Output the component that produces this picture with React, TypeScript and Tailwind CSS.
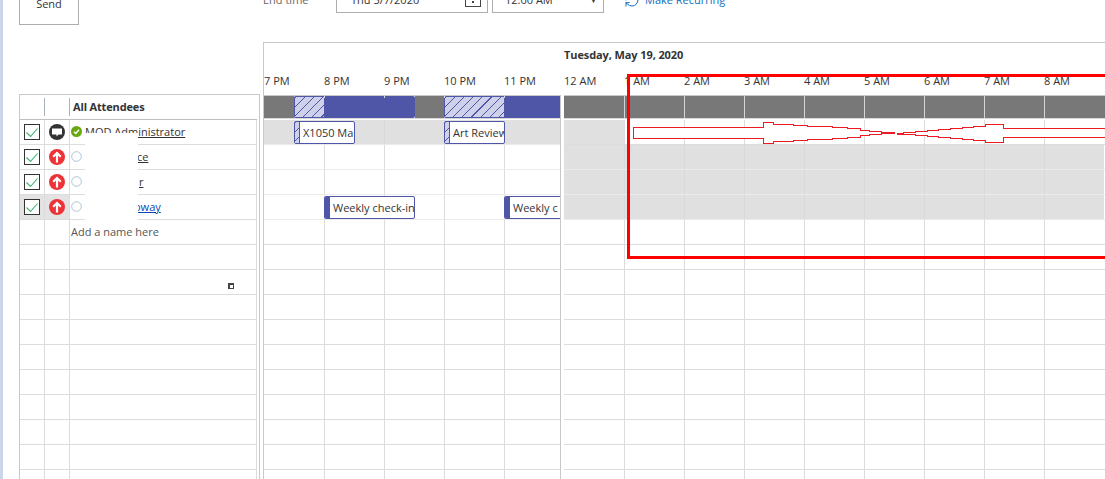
import React from 'react';
import { RefreshCw } from 'lucide-react';

const ROWS = Array.from({ length: 15 }, (_, i) => i);
const HATCH = 'bg-[repeating-linear-gradient(135deg,#4f56a8_0,#4f56a8_0.8px,#cfd1ea_0.8px,#cfd1ea_6.5px)]';

const attendees = [
  { name: 'MOD Administrator', pad: 'pl-[3px]', color: 'text-[#333]', kind: 'organizer' },
  { name: 'ce', pad: 'pl-[55px]', color: 'text-[#333]', kind: 'required' },
  { name: 'r', pad: 'pl-[57px]', color: 'text-[#333]', kind: 'required' },
  { name: 'oway', pad: 'pl-[52px]', color: 'text-[#0b45b5]', kind: 'required' },
];

const Check = () => (
  <svg width="16" height="16" viewBox="0 0 14 14" className="border border-[#333] bg-white">
    <path d="M1.5 7.5 L5.5 11.5 L12.5 3.5" fill="none" stroke="#3eb370" strokeWidth="1.1" />
  </svg>
);

const Bubble = () => (
  <svg width="16" height="16" viewBox="0 0 16 16">
    <circle cx="8" cy="8" r="8" fill="#333" />
    <path d="M3 4.5 H13 V10.5 H9.5 L7.5 12.5 V10.5 H3 Z" fill="#fff" />
  </svg>
);

const UpArrow = () => (
  <svg width="16" height="16" viewBox="0 0 16 16">
    <circle cx="8" cy="8" r="8" fill="#ee3338" />
    <path d="M8 13.5 V4 M4.2 7.8 L8 4 L11.8 7.8" fill="none" stroke="#fff" strokeWidth="2.2" />
  </svg>
);

const Presence = ({ on }: { on: boolean }) => (
  <svg width="11" height="11" viewBox="0 0 11 11" className="shrink-0 -mt-px">
    {on ? (
      <>
        <circle cx="5.5" cy="5.5" r="5.5" fill="#6ba80f" />
        <path d="M3 5.7 L4.8 7.4 L8 3.8" fill="none" stroke="#fff" strokeWidth="1.4" />
      </>
    ) : (
      <circle cx="5.5" cy="5.5" r="4.8" fill="#fff" stroke="#aac4d4" />
    )}
  </svg>
);

const AttendeeTable = () => (
  <div className="relative w-[241px] h-[385px] border-l border-t border-r border-[#c8c8c8] overflow-hidden">
    <div className="flex w-[237px] h-[25px] border-b border-[#c0c0c0]">
      <div className="w-[25px] flex items-center justify-end"><span className="w-px h-[18px] bg-[#a9b2bc]" /></div>
      <div className="w-[25px] flex items-center justify-end"><span className="w-px h-[18px] bg-[#a9b2bc]" /></div>
      <div className="pl-[3px] pt-[1px] flex items-center font-bold tracking-[-0.15px] text-[#333]">All Attendees</div>
    </div>
    {ROWS.map((r) => {
      const a = attendees[r];
      const selected = r === 3;
      return (
        <div key={r} className="flex w-[237px] h-[25px] border-b border-[#dcdcdc]">
          <div className={`w-[25px] flex items-center pl-[4px] border-r border-[#dcdcdc] ${selected ? 'bg-[#e3e3e3]' : ''}`}>
            {a && <Check />}
          </div>
          <div className={`w-[25px] flex items-center justify-center border-r border-[#dcdcdc] ${selected ? 'bg-[#e3e3e3]' : ''}`}>
            {a && (a.kind === 'organizer' ? <Bubble /> : <UpArrow />)}
          </div>
          <div className="relative flex-1 flex items-center border-r border-[#dcdcdc] pl-[1px]">
            {a && <Presence on={r === 0} />}
            {a && <span className={`${a.pad} underline ${a.color}`}>{a.name}</span>}
            {r === 4 && <span className="text-[#555]">Add a name here</span>}
            {r === 6 && <span className="absolute left-[158px] top-[13px] w-[6px] h-[6px] border-t-[2px] border-l-[2px] border-r border-b border-[#444] bg-white" />}
          </div>
        </div>
      );
    })}
    {/* blanked out names */}
    <div className="absolute left-[65px] top-[38px] w-[53px] h-[88px] bg-white" />
  </div>
);

const BusyBar = ({ left }: { left: boolean }) =>
  left ? (
    <div className="relative flex h-[22px]">
      <div className="w-[30px] bg-[#787878]" />
      <div className={`w-[30px] ${HATCH} border-y border-l border-[#4f56a8] rounded-l-[2px]`} />
      <div className="w-[91px] bg-[#4f56a8] rounded-r-[2px]" />
      <div className="w-[29px] bg-[#787878]" />
      <div className={`w-[60px] ${HATCH} border-y border-l border-[#4f56a8] rounded-l-[2px]`} />
      <div className="w-[56px] bg-[#4f56a8]" />
      {[60, 120, 180, 240].map((x, i) => (
        <span key={x} className={`absolute top-0 w-px h-[2px] bg-[#d8d8d8] ${['left-[60px]', 'left-[120px]', 'left-[180px]', 'left-[240px]'][i]}`} />
      ))}
    </div>
  ) : (
    <div className="flex h-[22px] bg-[#787878]">
      {Array.from({ length: 9 }, (_, i) => (
        <div key={i} className={`w-[60px] shrink-0 border-[#d4d4d4] ${i === 0 ? '' : 'border-l'}`} />
      ))}
    </div>
  );

const EventBox = ({ pos, stripe, text }: { pos: string; stripe: string; text: string }) => (
  <div className={`absolute flex h-[23px] border border-[#4f56a8] rounded-[2px] bg-white overflow-hidden ${pos}`}>
    <div className={`shrink-0 ${stripe}`} />
    <div className="pl-[3px] pr-[1px] leading-[21px] text-[#333] whitespace-nowrap overflow-hidden">{text}</div>
  </div>
);

const Day = ({ left, hours, width, date }: { left: boolean; hours: string[]; width: string; date?: string }) => {
  const shaded = (row: number, col: number) =>
    left ? row === 0 : row === 1 || row === 2 || row === 3 || (row === 0 && col === 0);
  return (
    <div className={`shrink-0 overflow-hidden ${width}`}>
      <div className="h-[25px] flex items-center font-bold tracking-[-0.1px] text-[#333]">{date}</div>
      <div className="flex h-[27px]">
        {hours.map((h) => (
          <div key={h} className="w-[60px] shrink-0 pt-[5px] text-[#333] whitespace-nowrap">{h}</div>
        ))}
      </div>
      <div className="border-t border-[#c8c8c8]">
        <BusyBar left={left} />
      </div>
      <div className="h-[2px] border-t border-[#d8d8d8]" />
      {ROWS.map((r) => (
        <div key={r} className={`relative flex h-[25px] border-b ${r < 4 && !(r === 0 && !left) ? 'border-[#ebebeb]' : 'border-[#dcdcdc]'}`}>
          {hours.map((h, c) => (
            <div key={h} className={`w-[60px] shrink-0 ${c > 0 ? 'border-l' : ''} ${shaded(r, c) ? 'bg-[#e0e0e0] border-[#d9d9d9]' : 'border-[#dcdcdc]'}`} />
          ))}
          {left && r === 0 && (
            <>
              <EventBox pos="left-[30px] top-[1px] w-[61px]" stripe={`w-[5px] border-r border-[#4f56a8] ${HATCH}`} text="X1050 Ma" />
              <EventBox pos="left-[180px] top-[1px] w-[61px]" stripe={`w-[5px] border-r border-[#4f56a8] ${HATCH}`} text="Art Review" />
            </>
          )}
          {left && r === 3 && (
            <>
              <EventBox pos="left-[60px] top-[1px] w-[91px]" stripe="w-[5px] bg-[#4f56a8]" text="Weekly check-in" />
              <EventBox pos="left-[240px] top-[1px] w-[60px]" stripe="w-[5px] bg-[#4f56a8]" text="Weekly c" />
            </>
          )}
        </div>
      ))}
    </div>
  );
};

const ArrowMark = () => (
  <svg width="1105" height="479" className="absolute left-0 top-0 pointer-events-none">
    <path
      d="M633.5 127.5 H763.5 V122.5 H773.5 V124.5 H793.5 V125.5 H807.5 V126.5 H832.5 V127.5 H847.5 V128.5 H860.5 V130.5 H869.5 V131.5 H881.5 V132.5 H894.5 V133.5 H881.5 V134.5 H869.5 V135.5 H860.5 V137.5 H847.5 V138.5 H832.5 V139.5 H807.5 V140.5 H793.5 V141.5 H773.5 V143.5 H763.5 V138.5 H633.5 Z"
      fill="#fff"
      stroke="#ed1c24"
      shapeRendering="crispEdges"
    />
    <path
      d="M1106 128.5 H1003.5 V124.5 H985.5 V126.5 H973.5 V127.5 H962.5 V128.5 H950.5 V129.5 H938.5 V130.5 H927.5 V131.5 H915.5 V132.5 H903.5 V133.5 H897.5 V134.5 H915.5 V135.5 H927.5 V136.5 H938.5 V137.5 H950.5 V138.5 H962.5 V139.5 H973.5 V140.5 H985.5 V142.5 H1003.5 V137.5 H1106 Z"
      fill="#fff"
      stroke="#ed1c24"
      shapeRendering="crispEdges"
    />
  </svg>
);

export default function App() {
  return (
    <div className="relative flex w-[1105px] h-[479px] overflow-hidden bg-white text-[11px] font-['Open_Sans',sans-serif]">
      <div className="w-[3px] bg-[#ccd6ea]" />
      <div className="flex-1 flex flex-col">
        <div className="flex items-start h-[42px]">
          <button className="ml-[16px] -mt-[17px] w-[60px] h-[42px] border border-[#adadad] text-[#333]">Send</button>
          <div className="ml-[184px] -mt-[13px] w-[73px] h-[26px] leading-[26px] text-[#666]">End time</div>
          <div className="-mt-[13px] w-[152px] h-[26px] border border-[#adadad] flex items-center justify-between pl-[14px] pr-[6px] text-[#333]">
            <span>Thu 5/7/2020</span>
            <span className="w-[16px] h-[20px] -mt-[6px] border border-[#444] flex items-end justify-center pb-[3px]">
              <span className="w-[2px] h-[2px] bg-[#444]" />
            </span>
          </div>
          <div className="ml-[4px] -mt-[13px] w-[112px] h-[26px] border border-[#adadad] flex items-center justify-between pl-[12px] pr-[5px] text-[#333]">
            <span>12:00 AM</span>
            <span className="text-[9px] text-[#444]">▼</span>
          </div>
          <div className="ml-[20px] -mt-[13px] h-[26px] flex items-center gap-[5px] text-[#106ebe]">
            <RefreshCw size={16} strokeWidth={1.5} />
            <span>Make Recurring</span>
          </div>
        </div>
        <div className="flex flex-1 min-h-0">
          <div className="ml-[16px] pt-[52px]">
            <AttendeeTable />
          </div>
          <div className="ml-[3px] flex-1 flex border-l border-t border-[#c8c8c8] overflow-hidden">
            <Day left hours={['7 PM', '8 PM', '9 PM', '10 PM', '11 PM']} width="w-[296px]" />
            <div className="shrink-0 w-[4px] mt-[52px]"><div className="w-px h-full bg-[#c8c8c8]" /></div>
            <Day
              left={false}
              date="Tuesday, May 19, 2020"
              hours={['12 AM', '1 AM', '2 AM', '3 AM', '4 AM', '5 AM', '6 AM', '7 AM', '8 AM']}
              width="w-[541px]"
            />
          </div>
        </div>
      </div>
      <ArrowMark />
      <div className="absolute left-[627px] top-[74px] w-[600px] h-[185px] border-[3px] border-[#ff0000]" />
    </div>
  );
}
